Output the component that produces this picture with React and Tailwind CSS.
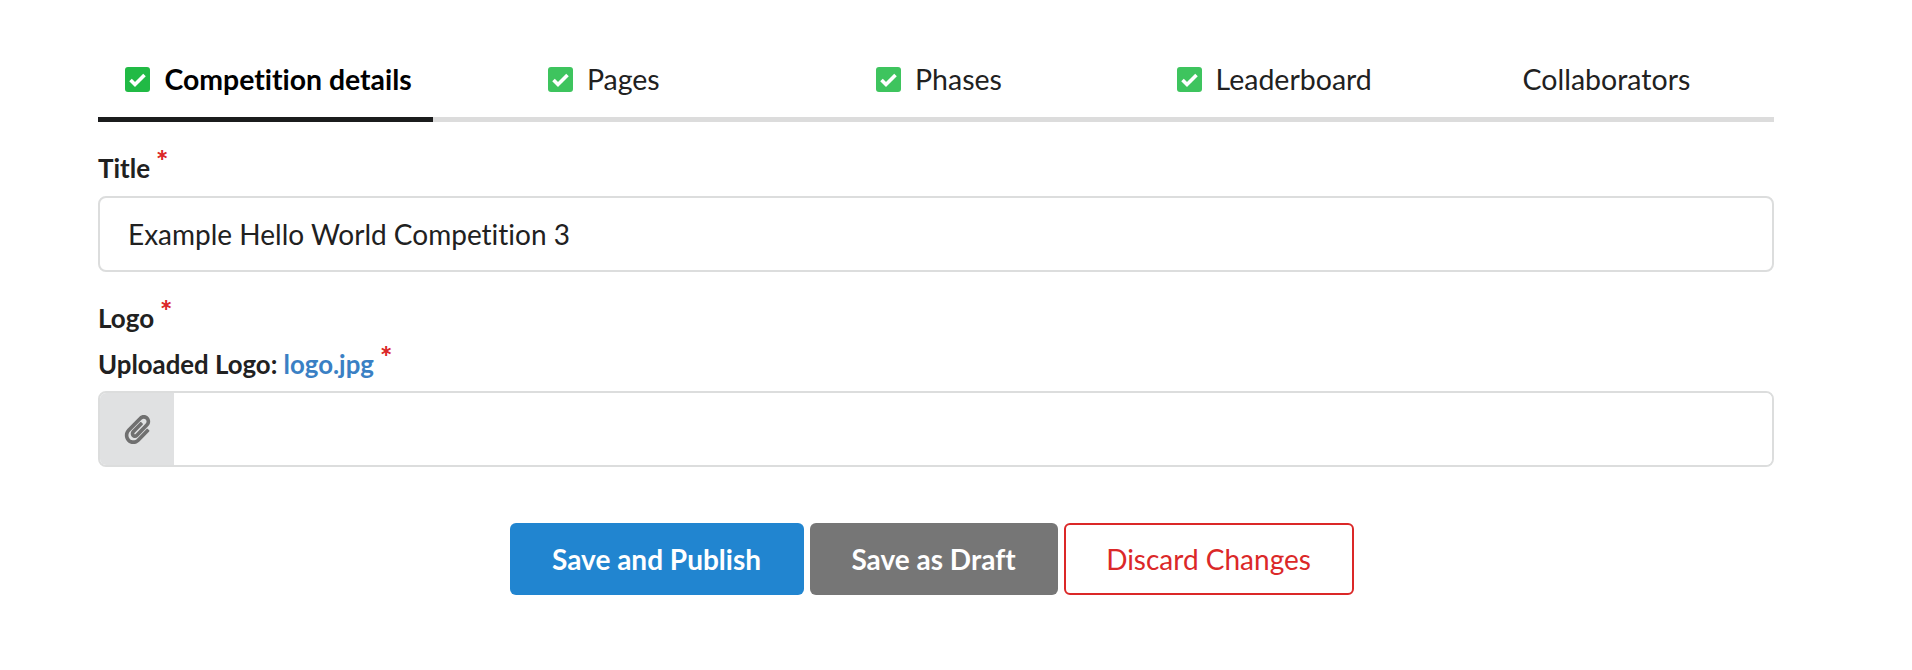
import { FaPaperclip } from "react-icons/fa";

function CheckBox({ active }) {
  return (
    <svg width="25" height="25" viewBox="0 0 25 25" aria-hidden="true" className="ml-[6px] shrink-0">
      <rect width="25" height="25" rx="3" fill={active ? "#21BA45" : "#3EC45E"} />
      <path d="M5.5 13 10 17.5 19.5 8" fill="none" stroke="#fff" strokeWidth="3.6" />
    </svg>
  );
}

function Tab({ label, checked, active }) {
  return (
    <div
      className={
        active
          ? "flex flex-1 items-center justify-center gap-[14px] h-[81px] -mb-[5px] border-b-[5px] border-[#1b1c1d] text-[28.4px] font-bold text-black"
          : "flex flex-1 items-center justify-center gap-[14px] h-[81px] -mb-[5px] border-b-[5px] border-transparent"
      }
    >
      {checked && <CheckBox active={active} />}
      <span>{label}</span>
    </div>
  );
}

function Star() {
  return <sup className="relative -top-[7px] ml-[6px] align-baseline text-[29px] font-black text-[#db2828] leading-none">*</sup>;
}

export default function App() {
  const tabs = [
    { label: "Competition details", checked: true, active: true },
    { label: "Pages", checked: true },
    { label: "Phases", checked: true },
    { label: "Leaderboard", checked: true },
    { label: "Collaborators" },
  ];

  return (
    <div className="h-[670px] bg-white px-[98px] pt-[41px] text-[#212121] [font-family:Lato,sans-serif] [font-variant-ligatures:none]">
      <div className="w-[1676px]">
        <div className="flex border-b-[5px] border-[#dcdcdc] text-[28.5px]">
          {tabs.map((tab) => (
            <Tab key={tab.label} {...tab} />
          ))}
        </div>

        <div className="mt-[28px] h-[36px] text-[26px] font-bold leading-[36px]">
          Title<Star />
        </div>
        <input
          readOnly
          value="Example Hello World Competition 3"
          className="mt-[10px] block h-[76px] w-full rounded-[8px] border-2 border-[#dcdddd] bg-white px-[28px] text-[28px] outline-none"
        />

        <div className="mt-[28px] h-[36px] text-[26px] font-bold leading-[36px]">
          Logo<Star />
        </div>
        <div className="mt-[10px] h-[36px] text-[25.8px] font-bold leading-[36px]">
          Uploaded Logo: <span className="text-[#3a80c4]">logo.jpg</span>
          <Star />
        </div>
        <div className="mt-[9px] flex h-[76px] w-full overflow-hidden rounded-[8px] border-2 border-[#dcdddd]">
          <div className="flex w-[74px] items-center justify-center bg-[#e0e1e2]">
            <FaPaperclip className="text-[29px] text-[#707070]" />
          </div>
          <div className="flex-1 bg-white" />
        </div>

        <div className="mt-[56px] flex justify-center gap-[6px] pr-[9px] text-[28px]">
          <button className="h-[72px] w-[294px] rounded-[6px] bg-[#2185d0] font-bold text-white">Save and Publish</button>
          <button className="h-[72px] w-[248px] rounded-[6px] bg-[#767676] font-bold text-white">Save as Draft</button>
          <button className="h-[72px] w-[290px] rounded-[6px] border-2 border-[#db2828] bg-white text-[#db2828]">Discard Changes</button>
        </div>
      </div>
    </div>
  );
}
